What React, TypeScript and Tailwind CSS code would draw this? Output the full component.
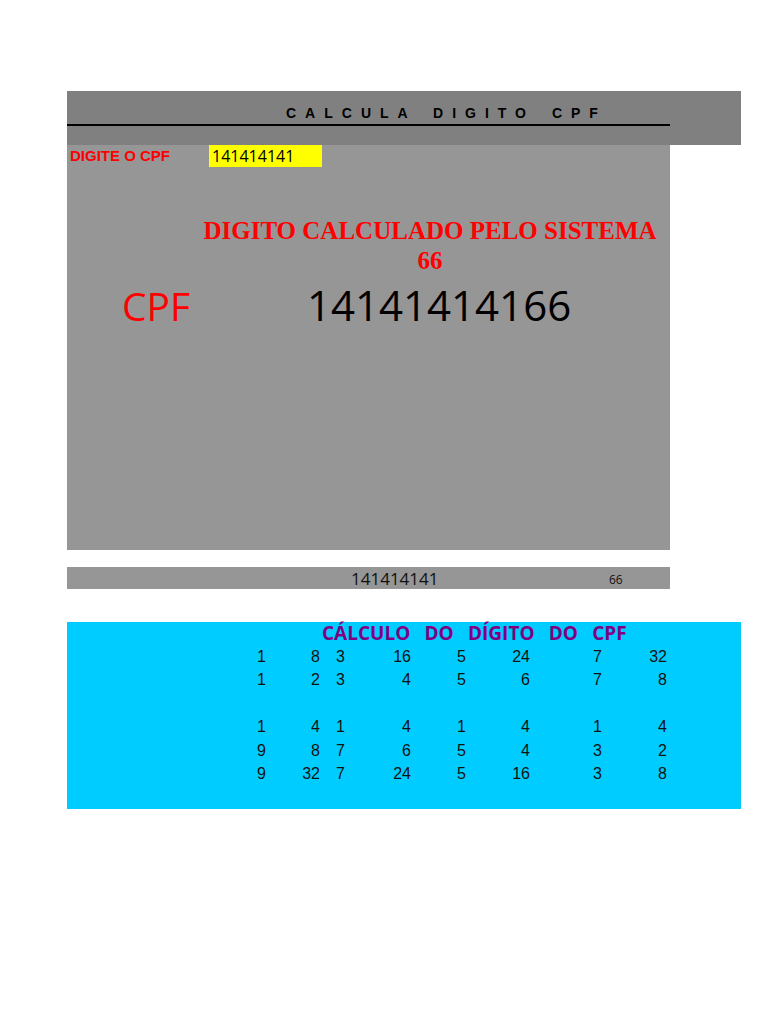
import React from 'react';

const ROWS: (string[] | null)[] = [
  ['1', '8', '3', '16', '5', '24', '7', '32'],
  ['1', '2', '3', '4', '5', '6', '7', '8'],
  null,
  ['1', '4', '1', '4', '1', '4', '1', '4'],
  ['9', '8', '7', '6', '5', '4', '3', '2'],
  ['9', '32', '7', '24', '5', '16', '3', '8'],
];

const CELL_WIDTHS = ['w-[199px]', 'w-[54px]', 'w-[25px]', 'w-[66px]', 'w-[55px]', 'w-[64px]', 'w-[72px]', 'w-[65px]'];

const sans = { fontFamily: '"Liberation Sans", Arial, sans-serif' };
const open = { fontFamily: '"Open Sans", "Noto Sans", sans-serif' };

export default function App() {
  return (
    <div className="w-[768px] h-[1024px] bg-white pt-[91px] pl-[67px]">
      {/* Header */}
      <div className="w-[674px] h-[54px] bg-[#808080]">
        <div className="w-[603px] h-[35px] border-b-2 border-black pt-[14px] pl-[219px]">
          <p
            className="text-[14px] leading-[16px] font-bold text-black tracking-[9px] [word-spacing:4px] whitespace-pre"
            style={sans}
          >
            {'CALCULA DIGITO CPF'}
          </p>
        </div>
      </div>

      {/* Main panel */}
      <div className="w-[603px] h-[405px] bg-[#969696]">
        <div className="flex h-[22px] items-center">
          <span className="w-[142px] pl-[3px] text-[15px] font-bold text-[#ff0000]" style={sans}>
            DIGITE O CPF
          </span>
          <div className="w-[113px] h-[22px] bg-[#ffff00] pl-[3px] flex items-center">
            <span className="text-[16px] text-black leading-none" style={open}>
              141414141
            </span>
          </div>
        </div>

        <div
          className="mt-[48px] ml-[136px] w-[454px] text-center font-bold text-[#ff0000] text-[25px] whitespace-nowrap"
          style={{ fontFamily: '"Liberation Serif", "Times New Roman", serif' }}
        >
          <p className="leading-[32px]">DIGITO CALCULADO PELO SISTEMA</p>
          <p className="mt-[5px] leading-[18px]">66</p>
        </div>

        <div className="flex h-[70px] items-center" style={open}>
          <span className="ml-[55px] w-[185px] text-[39px] text-[#ff0000] leading-none">CPF</span>
          <span className="text-[42px] text-black leading-none">14141414166</span>
        </div>
      </div>

      {/* Summary bar */}
      <div className="mt-[17px] w-[603px] h-[22px] bg-[#969696] flex items-center pl-[284px]" style={open}>
        <span className="w-[258px] text-[17px] leading-none text-[#111]">141414141</span>
        <span className="pt-[4px] text-[12px] leading-none text-[#111]">66</span>
      </div>

      {/* Calculation */}
      <div className="mt-[33px] w-[674px] h-[187px] bg-[#00ccff]">
        <div className="h-[23px] pl-[255px] flex items-center">
          <span
            className="text-[19px] font-bold text-[#800080] whitespace-pre leading-none [word-spacing:2.2px]"
            style={open}
          >
            {'CÁLCULO  DO  DÍGITO  DO  CPF'}
          </span>
        </div>
        {ROWS.map((row, i) =>
          row ? (
            <div key={i} className="flex h-[23.5px] items-center text-[16px] text-[#111]" style={sans}>
              {row.map((v, j) => (
                <span key={j} className={`${CELL_WIDTHS[j]} text-right`}>
                  {v}
                </span>
              ))}
            </div>
          ) : (
            <div key={i} className="h-[23.5px]" />
          ),
        )}
      </div>
    </div>
  );
}
